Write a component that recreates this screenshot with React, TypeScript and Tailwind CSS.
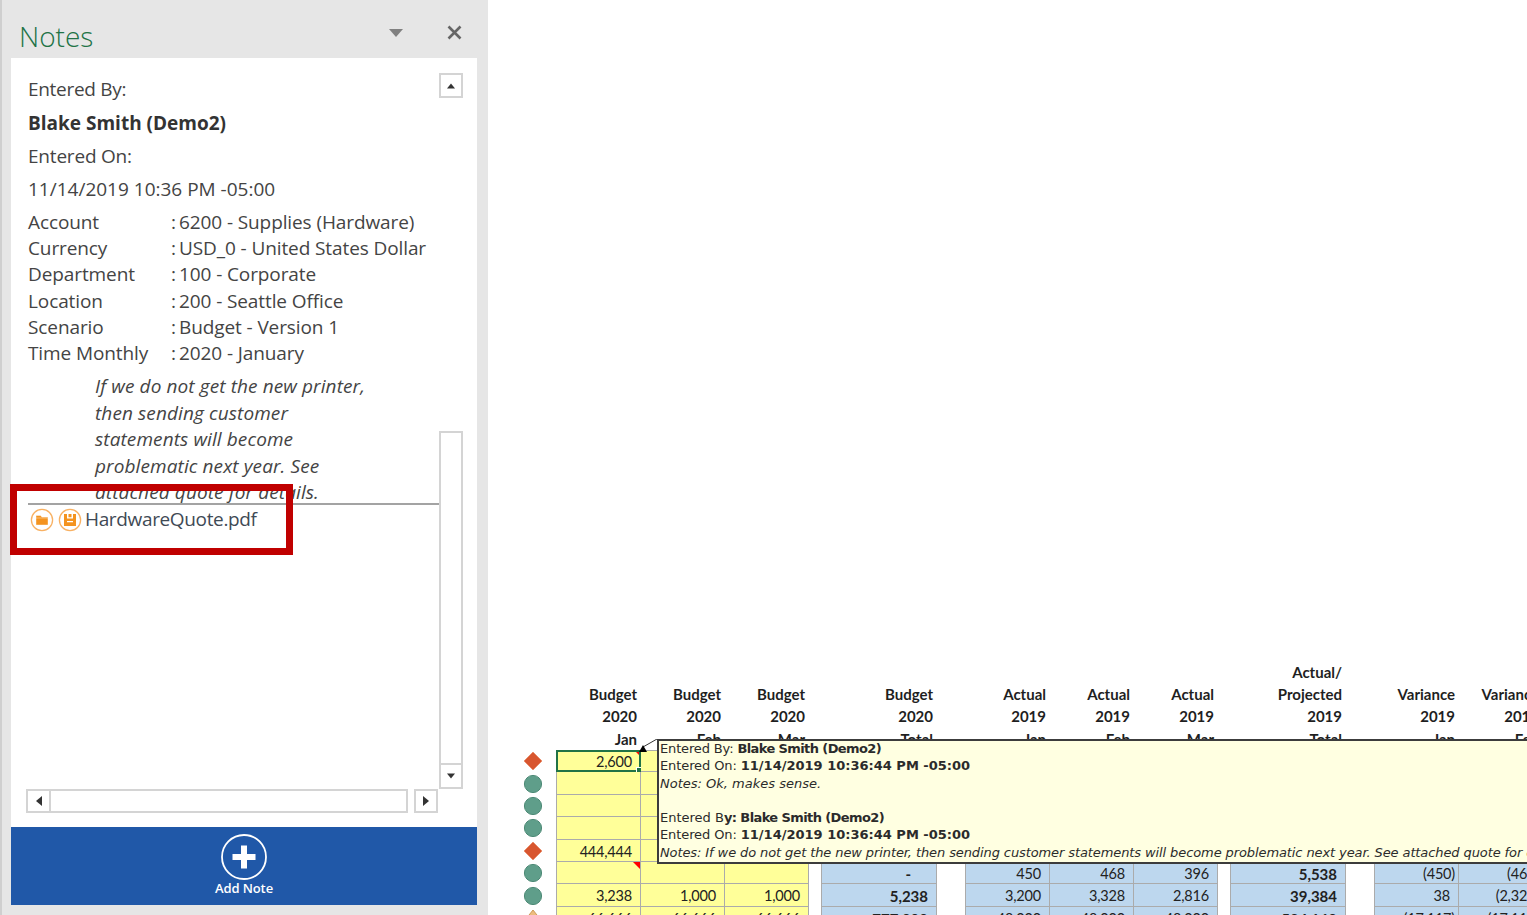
import React from "react";

const sans = "font-['Open_Sans','Noto_Sans',sans-serif]";

function Diamond() {
  return (
    <svg width="20" height="20" viewBox="0 0 20 20" className="block">
      <path d="M10 1 L19 10 L10 19 L1 10 Z" fill="#d8562f" stroke="#e8906f" strokeWidth="1" />
    </svg>
  );
}

function Dot() {
  return (
    <svg width="20" height="20" viewBox="0 0 20 20" className="block">
      <circle cx="10" cy="10" r="8.6" fill="#5f9e8a" stroke="#4d8a76" strokeWidth="1" />
    </svg>
  );
}

function Warn() {
  return (
    <svg width="20" height="20" viewBox="0 0 20 20" className="block">
      <path d="M10 2 C13 6 17 10 19 15 L1 15 C3 10 7 6 10 2 Z" fill="#edbd7f" stroke="#cf9a55" strokeWidth="1" />
    </svg>
  );
}

function Tri({ dir }: { dir: "up" | "down" | "left" | "right" }) {
  const p = {
    up: "M1 7.5 L5 2.5 L9 7.5 Z",
    down: "M1 2.5 L9 2.5 L5 7.5 Z",
    left: "M8 0 L8 10 L2 5 Z",
    right: "M2 0 L2 10 L8 5 Z",
  }[dir];
  return (
    <svg width="10" height="10" viewBox="0 0 10 10" className="block">
      <path d={p} fill="#333333" />
    </svg>
  );
}

function OrangeRound({ kind }: { kind: "folder" | "save" }) {
  return (
    <svg width="24" height="24" viewBox="0 0 24 24" className="block shrink-0">
      <circle cx="12" cy="12" r="10.6" fill="#ffffff" stroke="#f8b163" strokeWidth="1.3" />
      {kind === "folder" ? (
        <path d="M6 7.5 h4.5 l1.4 1.6 H18 V17 H6 Z M6 10 H18" fill="#f4931f" stroke="#ffffff" strokeWidth="0.4" />
      ) : (
        <path
          fillRule="evenodd"
          d="M6 6 H9 V10.5 H15 V6 H18 V18 H6 Z M9 13 H15 V14.3 H9 Z M10.5 6 H13.5 V9.3 H10.5 Z"
          fill="#f4931f"
        />
      )}
    </svg>
  );
}

const metaRows: [string, string][] = [
  ["Account", "6200 - Supplies (Hardware)"],
  ["Currency", "USD_0 - United States Dollar"],
  ["Department", "100 - Corporate"],
  ["Location", "200 - Seattle Office"],
  ["Scenario", "Budget - Version 1"],
  ["Time Monthly", "2020 - January"],
];

const noteLines = [
  "If we do not get the new printer,",
  "then sending customer",
  "statements will become",
  "problematic next year. See",
  "attached quote for details.",
];

function NotesPanel() {
  return (
    <aside
      className={`${sans} w-[488px] shrink-0 h-[915px] bg-[#e6e6e6] border-l-2 border-[#cfcfcf] pl-[9px] pr-[11px] pb-[10px] flex flex-col`}
    >
      <header className="h-[58px] shrink-0 flex items-start relative">
        <h1 className="ml-[8px] mt-[17px] text-[28px] leading-[38px] font-light text-[#217346]">Notes</h1>
        <div className="ml-auto mt-[29px] mr-[44px]">
          <svg width="14" height="8" viewBox="0 0 14 8" className="block">
            <path d="M0 0 H14 L7 8 Z" fill="#808080" />
          </svg>
        </div>
        <div className="mt-[25px] mr-[15px]">
          <svg width="15" height="15" viewBox="0 0 15 15" className="block">
            <path d="M1.5 1.5 L13.5 13.5 M13.5 1.5 L1.5 13.5" stroke="#666666" strokeWidth="2.6" />
          </svg>
        </div>
      </header>

      <div className="flex-1 min-h-0 bg-white flex flex-col pt-[15px] pb-[14px]">
        <div className="flex-1 min-h-0 flex">
          <div className="flex-1 min-w-0 pl-[17px] text-[#444444] text-[19px] overflow-hidden">
            <div className="h-[33px] leading-[33px] tracking-[-0.3px]">Entered By:</div>
            <div className="h-[34px] leading-[34px] font-bold text-[#333333]">Blake Smith (Demo2)</div>
            <div className="h-[32px] leading-[32px] tracking-[-0.2px]">Entered On:</div>
            <div className="h-[34px] leading-[34px]">11/14/2019 10:36 PM -05:00</div>
            <div className="mt-[3px] tracking-[-0.1px]">
              {metaRows.map(([k, v]) => (
                <div key={k} className="flex h-[26.2px] leading-[27px]">
                  <span className="w-[143px] shrink-0">{k}</span>
                  <span className="w-[8px] shrink-0">:</span>
                  <span>{v}</span>
                </div>
              ))}
            </div>
            <div className="pl-[67px] mt-[7px] italic tracking-[0.1px]">
              {noteLines.map((l) => (
                <div key={l} className="h-[26.5px] leading-[26.5px]">
                  {l}
                </div>
              ))}
            </div>
            <div className="h-[2px] bg-[#a3a3a3] -mt-[3px] relative" />
            <div className="flex items-center h-[30px] gap-[4px] pl-[2px] text-[#3f4a55]">
              <OrangeRound kind="folder" />
              <OrangeRound kind="save" />
              <span className="-ml-[1px] tracking-[-0.35px]">HardwareQuote.pdf</span>
            </div>
          </div>
          <div className="w-[24px] shrink-0 mr-[14px] flex flex-col">
            <div className="h-[25px] border-2 border-[#d4d4d4] flex items-center justify-center">
              <Tri dir="up" />
            </div>
            <div className="flex-1" />
            <div className="h-[334px] border-2 border-[#d4d4d4]" />
            <div className="h-[24px] border-2 border-t-0 border-[#d4d4d4] flex items-center justify-center">
              <Tri dir="down" />
            </div>
          </div>
        </div>
        <div className="h-[24px] shrink-0 ml-[15px] w-[412px] flex">
          <div className="w-[25px] border-2 border-[#d4d4d4] flex items-center justify-center">
            <Tri dir="left" />
          </div>
          <div className="w-[357px] border-2 border-l-0 border-[#d4d4d4]" />
          <div className="w-[6px]" />
          <div className="w-[24px] border-2 border-[#d4d4d4] flex items-center justify-center">
            <Tri dir="right" />
          </div>
        </div>
      </div>

      <button className="h-[78px] shrink-0 bg-[#2058a8] flex flex-col items-center pt-[7px] text-white">
        <svg width="46" height="46" viewBox="0 0 46 46" className="block">
          <circle cx="23" cy="23" r="22" fill="none" stroke="#ffffff" strokeWidth="1.8" />
          <path d="M11.5 23 H34.5 M23 11.5 V34.5" stroke="#ffffff" strokeWidth="6" />
        </svg>
        <span className="text-[13px] leading-[16px] font-semibold tracking-[-0.1px]">Add Note</span>
      </button>
    </aside>
  );
}

type Cell = { t?: string; b?: boolean; p?: boolean; d?: boolean; flag?: "s" | "l"; sel?: boolean };

const headers: (string[] | null)[] = [
  null,
  ["Budget", "2020", "Jan"],
  ["Budget", "2020", "Feb"],
  ["Budget", "2020", "Mar"],
  null,
  ["Budget", "2020", "Total"],
  null,
  ["Actual", "2019", "Jan"],
  ["Actual", "2019", "Feb"],
  ["Actual", "2019", "Mar"],
  null,
  ["Actual/", "Projected", "2019", "Total"],
  null,
  ["Variance", "2019", "Jan"],
  ["Variance", "2019", "Feb"],
];

const kinds = ["m", "y", "y", "y", "g", "b", "g", "b", "b", "b", "g", "b", "g", "b", "b"];

const rows: { m: "d" | "c" | "w"; c: Cell[] }[] = [
  { m: "d", c: [{ t: "2,600", flag: "s", sel: true }, {}, {}, {}, {}, {}, {}, {}, {}, {}] },
  { m: "c", c: [{}, {}, {}, {}, {}, {}, {}, {}, {}, {}] },
  { m: "c", c: [{}, {}, {}, {}, {}, {}, {}, {}, {}, {}] },
  { m: "c", c: [{}, {}, {}, {}, {}, {}, {}, {}, {}, {}] },
  { m: "d", c: [{ t: "444,444" }, {}, {}, {}, {}, {}, {}, {}, {}, {}] },
  {
    m: "c",
    c: [
      { flag: "l" },
      {},
      {},
      { t: "-", b: true, d: true },
      { t: "450" },
      { t: "468" },
      { t: "396" },
      { t: "5,538", b: true },
      { t: "(450)", p: true },
      { t: "(468)", p: true },
    ],
  },
  {
    m: "c",
    c: [
      { t: "3,238" },
      { t: "1,000" },
      { t: "1,000" },
      { t: "5,238", b: true },
      { t: "3,200" },
      { t: "3,328" },
      { t: "2,816" },
      { t: "39,384", b: true },
      { t: "38" },
      { t: "(2,328)", p: true },
    ],
  },
  {
    m: "w",
    c: [
      { t: "66,666" },
      { t: "66,666" },
      { t: "66,666" },
      { t: "777,000", b: true },
      { t: "48,000" },
      { t: "48,000" },
      { t: "48,000" },
      { t: "584,160", b: true },
      { t: "(17,117)", p: true },
      { t: "(17,117)", p: true },
    ],
  },
];

function DataCell({ cell, yellow, first, top }: { cell: Cell; yellow: boolean; first: boolean; top: boolean }) {
  return (
    <div
      className={`relative h-[22.4px] border-r border-b border-[#ababab] ${first ? "border-l" : ""} ${
        top ? "border-t leading-[22px]" : "leading-[24px]"
      } ${yellow ? "bg-[#ffff99]" : "bg-[#bdd7ee]"} text-right text-[#222222] ${
        cell.b ? "font-bold text-[15px]" : "text-[14.5px] tracking-[-0.2px]"
      } ${cell.d ? "pr-[25px]" : cell.p ? "pr-[3px]" : "pr-[8px]"}`}
    >
      {cell.t}
      {cell.flag === "s" && (
        <span className="absolute top-0 right-0 border-t-[5px] border-l-[5px] border-t-[#ff0000] border-l-transparent" />
      )}
      {cell.flag === "l" && (
        <span className="absolute top-0 right-0 border-t-[7px] border-l-[7px] border-t-[#ff0000] border-l-transparent" />
      )}
      {cell.sel && (
        <>
          <span className="absolute -inset-px border-2 border-[#217346]" />
          <span className="absolute -right-[3px] -bottom-[3px] w-[7px] h-[7px] bg-[#217346] border border-white" />
        </>
      )}
    </div>
  );
}

function Sheet() {
  return (
    <div className="font-['Lato','Open_Sans',sans-serif] w-[1055px] pt-[662px] grid grid-cols-[68px_85px_84px_84px_12px_116px_28px_85px_84px_84px_12px_116px_28px_85px_84px]">
      {headers.map((h, i) => (
        <div
          key={i}
          className="h-[88px] flex flex-col justify-end text-right pr-[4px] font-bold text-[15px] leading-[22.3px] text-[#1f1f1f]"
        >
          {h?.map((l) => (
            <div key={l}>{l}</div>
          ))}
        </div>
      ))}
      {rows.map((r, ri) => {
        let idx = 0;
        return kinds.map((k, ki) => {
          const key = `${ri}-${ki}`;
          if (k === "m")
            return (
              <div key={key} className="h-[22.4px] flex items-center justify-end pr-[13px]">
                {r.m === "d" ? <Diamond /> : r.m === "c" ? <Dot /> : <Warn />}
              </div>
            );
          if (k === "g") return <div key={key} />;
          const cell = r.c[idx++];
          return (
            <DataCell
              key={key}
              cell={cell}
              yellow={k === "y"}
              first={kinds[ki - 1] === "m" || kinds[ki - 1] === "g"}
              top={ri === 0}
            />
          );
        });
      })}
    </div>
  );
}

function Tooltip() {
  return (
    <div className="absolute left-[169px] top-[739px] w-[900px] h-[125px] border-2 border-[#3c3c3c] bg-[#ffffe1] pl-[1px] font-['DejaVu_Sans',sans-serif] text-[13px] leading-[17.3px] text-[#2b2b2b] whitespace-nowrap">
      <div className="-mt-[1px] tracking-[-0.15px]">
        Entered By: <b className="tracking-[-0.6px]">Blake Smith (Demo2)</b>
      </div>
      <div className="tracking-[-0.1px]">
        Entered On: <b className="tracking-normal">11/14/2019 10:36:44 PM -05:00</b>
      </div>
      <div className="italic">Notes: Ok, makes sense.</div>
      <div className="h-[17.3px]" />
      <div>
        Entered B<b className="tracking-[-0.6px]">y: Blake Smith (Demo2)</b>
      </div>
      <div className="tracking-[-0.1px]">
        Entered On: <b className="tracking-normal">11/14/2019 10:36:44 PM -05:00</b>
      </div>
      <div className="italic tracking-[-0.1px]">
        Notes: If we do not get the new printer, then sending customer statements will become problematic next year. See attached quote for details.
      </div>
    </div>
  );
}

export default function App() {
  return (
    <div className="w-[1527px] h-[915px] overflow-hidden flex bg-white relative">
      <NotesPanel />
      <main className="flex-1 relative h-[915px] overflow-hidden bg-white">
        <Sheet />
      </main>
      <div className="absolute left-[488px] top-0 w-[1039px] h-[915px] overflow-hidden pointer-events-none">
        <Tooltip />
        <svg width="20" height="14" viewBox="0 0 20 14" className="absolute left-[151px] top-[739px]">
          <path d="M18 0 L4 8" stroke="#333333" strokeWidth="1" />
          <path d="M4 6 L8 13 L0 13 Z" fill="#000000" />
        </svg>
      </div>
      <div className="absolute left-[10px] top-[484px] w-[283px] h-[71px] border-[7px] border-[#c00000]" />
    </div>
  );
}
